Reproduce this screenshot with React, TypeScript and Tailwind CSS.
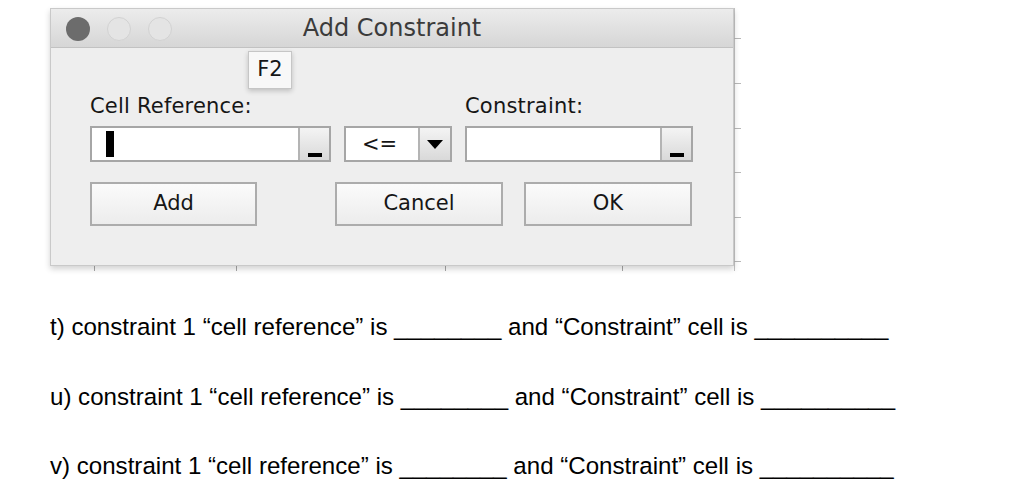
import React from 'react'

const ui = { fontFamily: '"DejaVu Sans", "Open Sans", sans-serif' }
const doc = { fontFamily: '"Liberation Sans", Arial, sans-serif' }

const rowTicks = [38, 83, 128, 172, 217, 261]
const colTicks = [44, 186, 395, 572]

function PickerButton({ className = '' }: { className?: string }) {
    return (
        <div className={`flex h-full w-[31px] items-end justify-center border-l-2 border-[#b4b4b4] bg-gradient-to-b from-[#f4f4f4] to-[#d9d9d9] pb-[3px] ${className}`}>
            <div className="h-[4px] w-[14px] bg-black" />
        </div>
    )
}

function DialogButton({ label, width }: { label: string; width: string }) {
    return (
        <div className={`flex h-[44px] ${width} items-center justify-center border-2 border-[#acacac] bg-gradient-to-b from-[#fbfbfb] to-[#ececec] text-[21px] text-[#161616]`}>
            {label}
        </div>
    )
}

function Question({ letter }: { letter: string }) {
    return (
        <p className="whitespace-pre text-black">
            {`${letter}) constraint 1 \u201Ccell reference\u201D is ________ and \u201CConstraint\u201D cell is __________`}
        </p>
    )
}

export default function App() {
    return (
        <div className="relative h-[498px] w-[1024px] overflow-hidden bg-white">
            <div className="relative ml-[50px] w-[700px] pt-[8px]" style={ui}>
                {/* spreadsheet grid peeking out behind the window */}
                <div className="absolute left-[684px] top-[8px] h-[263px] w-px bg-[#c4c4c4]" />
                {rowTicks.map((y) => (
                    <div key={y} className="absolute left-[684px] h-px w-[7px] bg-[#b8b8b8]" style={{ top: y }} />
                ))}
                {colTicks.map((x) => (
                    <div key={x} className="absolute top-[265px] h-[6px] w-px bg-[#a8a8a8]" style={{ left: x }} />
                ))}

                <div className="relative h-[258px] w-[684px] border border-[#c9c9c9] bg-[#eeeeee] shadow-[0_3px_6px_rgba(0,0,0,0.18)]">
                    {/* title bar */}
                    <div className="grid h-[39px] grid-cols-[1fr_auto_1fr] items-center border-b border-[#c2c2c2] bg-gradient-to-b from-[#ececec] to-[#d6d6d6]">
                        <div className="flex items-center gap-[17px] pl-[15px] pt-[1px]">
                            <span className="size-[24px] rounded-full bg-[#6c6c6c]" />
                            <span className="size-[24px] rounded-full border border-[#d2d2d2] bg-[#e4e4e4]" />
                            <span className="size-[24px] rounded-full border border-[#d2d2d2] bg-[#e4e4e4]" />
                        </div>
                        <div className="text-[24px] leading-[28px] text-[#3b3b3b]">Add Constraint</div>
                        <div />
                    </div>

                    {/* body */}
                    <div className="pl-[39px] pt-[46px]">
                        <div className="flex text-[21px] leading-[24px] tracking-[0.2px] text-[#161616]">
                            <span className="w-[375px]">Cell Reference:</span>
                            <span>Constraint:</span>
                        </div>

                        <div className="mt-[8px] flex h-[36px] gap-[13px]">
                            <div className="flex w-[241px] items-center border-2 border-[#a6a6a6] bg-white">
                                <div className="ml-[14px] h-[26px] w-[8px] bg-black" />
                                <div className="flex-1" />
                                <PickerButton />
                            </div>
                            <div className="flex w-[108px] items-center border-2 border-[#a6a6a6] bg-white">
                                <span className="ml-[16px] flex-1 text-[21px] leading-none text-[#161616]">&lt;=</span>
                                <div className="flex h-full w-[32px] items-center justify-center border-l-2 border-[#b4b4b4] bg-gradient-to-b from-[#f4f4f4] to-[#d9d9d9]">
                                    <svg width="16" height="9" viewBox="0 0 16 9">
                                        <path d="M0 0H16L8 9Z" fill="#000" />
                                    </svg>
                                </div>
                            </div>
                            <div className="flex w-[228px] items-center border-2 border-[#a6a6a6] bg-white">
                                <div className="flex-1" />
                                <PickerButton />
                            </div>
                        </div>

                        <div className="mt-[20px] flex">
                            <DialogButton label="Add" width="w-[167px]" />
                            <div className="ml-[78px] flex gap-[21px]">
                                <DialogButton label="Cancel" width="w-[168px]" />
                                <DialogButton label="OK" width="w-[168px]" />
                            </div>
                        </div>
                    </div>

                    {/* F2 tooltip */}
                    <div className="absolute left-[197px] top-[42px] flex h-[38px] w-[44px] items-center justify-center border border-[#c6c6c6] bg-[#f8f8f8] text-[21px] text-[#161616] shadow-[0_2px_5px_rgba(0,0,0,0.2)]">
                        F2
                    </div>
                </div>
            </div>

            <div className="ml-[50px] mt-[47px] flex flex-col gap-[41.5px] text-[24.1px] leading-[28px]" style={doc}>
                <Question letter="t" />
                <Question letter="u" />
                <Question letter="v" />
            </div>
        </div>
    )
}
